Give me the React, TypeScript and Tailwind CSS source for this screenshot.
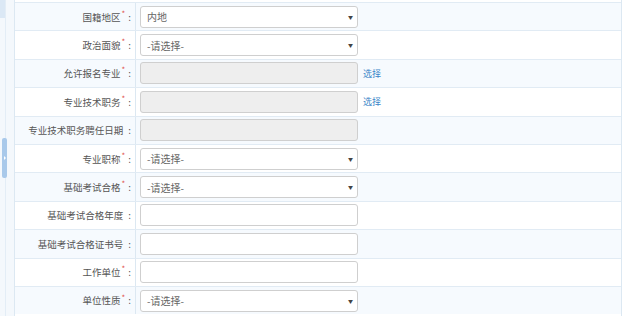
import React from "react";

type Row = { label: string; req: boolean; kind: "select" | "disabled" | "text"; value?: string; link?: boolean };

const rows: Row[] = [
  { label: "国籍地区", req: true, kind: "select", value: "内地" },
  { label: "政治面貌", req: true, kind: "select", value: "-请选择-" },
  { label: "允许报名专业", req: true, kind: "disabled", link: true },
  { label: "专业技术职务", req: true, kind: "disabled", link: true },
  { label: "专业技术职务聘任日期", req: false, kind: "disabled" },
  { label: "专业职称", req: true, kind: "select", value: "-请选择-" },
  { label: "基础考试合格", req: true, kind: "select", value: "-请选择-" },
  { label: "基础考试合格年度", req: false, kind: "text" },
  { label: "基础考试合格证书号", req: false, kind: "text" },
  { label: "工作单位", req: true, kind: "text" },
  { label: "单位性质", req: true, kind: "select", value: "-请选择-" },
];

export default function App() {
  return (
    <div
      className="w-[640px] h-[316px] overflow-hidden bg-white flex text-[10px] text-[#555]"
      style={{ fontFamily: '"Noto Sans CJK SC", "Noto Sans", sans-serif' }}
    >
      <div className="w-[15px] h-full bg-[#f4f8fc] relative border-r border-[#dce8f2] shrink-0">
        <div className="absolute left-0 top-0 w-[5px] h-[18px] bg-[#dbe8f5]" />
        <div className="absolute left-[5px] top-0 w-px h-full bg-[#e3edf6]" />
        <div className="absolute left-[2px] top-[138px] w-[5px] h-[40px] rounded-[2px] bg-[#a9c9ea] flex items-center justify-center">
          <div className="w-0 h-0 border-y-[2px] border-y-transparent border-l-[2px] border-l-white" />
        </div>
      </div>
      <div className="w-[607px] shrink-0 flex flex-col pt-[2px] border-r border-[#dce8f2]">
        {rows.map((r, i) => (
          <div
            key={i}
            className={`flex h-[28.4px] border-t border-[#e1ebf4] shrink-0 ${i % 2 === 0 ? "bg-[#f6fafe]" : "bg-white"}`}
          >
            <div className="w-[121px] shrink-0 border-r border-[#dce8f2] flex items-center justify-end pr-[4px] whitespace-nowrap text-[9.5px]">
              <span>{r.label}</span>
              {r.req && <span className="text-[#e05050] text-[8px] relative top-[-3px] ml-[1px]">*</span>}
              <span className={r.req ? "ml-[3px]" : "ml-[5px]"}>:</span>
            </div>
            <div className="flex items-center pl-[4px] gap-[5px]">
              {r.kind === "select" && (
                <div className="w-[218px] h-[22px] rounded-[3px] border border-[#cfcfcf] bg-white flex items-center justify-between pl-[6px] pr-[4px] text-[#666]">
                  <span>{r.value}</span>
                  <span className="text-[5px] text-[#444]">▼</span>
                </div>
              )}
              {r.kind === "disabled" && (
                <div className="w-[218px] h-[22px] rounded-[3px] border border-[#cfcfcf] bg-[#eeeeee]" />
              )}
              {r.kind === "text" && (
                <div className="w-[218px] h-[22px] rounded-[3px] border border-[#cfcfcf] bg-white" />
              )}
              {r.link && <span className="text-[#3a86c8] text-[9px]">选择</span>}
            </div>
          </div>
        ))}
      </div>
    </div>
  );
}
